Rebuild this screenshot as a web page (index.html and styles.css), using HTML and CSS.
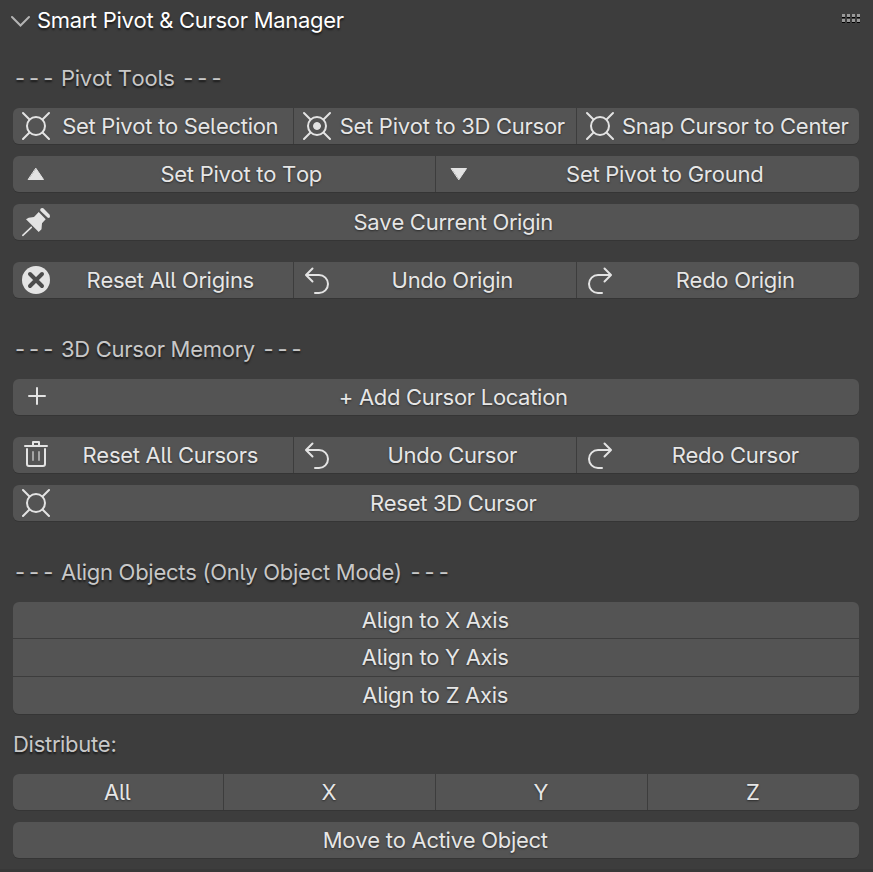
FILE: index.html
```
<!DOCTYPE html>
<html lang="en">
<head>
<meta charset="utf-8">
<title>Smart Pivot &amp; Cursor Manager</title>
<link rel="stylesheet" href="styles.css">
</head>
<body>
<svg class="defs" width="0" height="0" aria-hidden="true">
  <symbol id="cursor" viewBox="0 0 46 36"><circle cx="23" cy="18" r="9"/><path d="M10 5l6.500 6.500M36 5l-6.500 6.500M10 31l6.500-6.500M36 31l-6.500-6.500"/></symbol>
  <symbol id="undo" viewBox="0 0 46 36"><path d="M21 31h4a9 9 0 0 0 0-18H12.500M18.500 6.500L12 13l6.500 6.500"/></symbol>
  <symbol id="redo" viewBox="0 0 46 36"><path d="M25 31h-4a9 9 0 0 1 0-18h12.500M27.500 6.500L34 13l-6.500 6.500"/></symbol>
</svg>
<main class="panel">
  <header class="head">
    <svg class="chevron" width="20" height="14" viewBox="0 0 20 14"><path d="M2 3l8.500 8.500L19 3"/></svg>
    <h1>Smart Pivot &amp; Cursor Manager</h1>
    <div class="grip"><i></i><i></i><i></i><i></i><i></i><i></i><i></i><i></i></div>
  </header>

  <section>
    <h2><span class="dash lead">---</span> Pivot Tools <span class="dash trail">---</span></h2>
    <div class="row three">
      <button class="ic"><svg class="icon"><use href="#cursor"/></svg><span>Set Pivot to Selection</span></button>
      <button class="ic"><svg class="icon"><use href="#cursor"/><circle class="fill" cx="23" cy="18" r="3.500"/></svg><span>Set Pivot to 3D Cursor</span></button>
      <button class="ic"><svg class="icon"><use href="#cursor"/></svg><span>Snap Cursor to Center</span></button>
    </div>
    <div class="row two">
      <button class="ic"><svg class="icon"><path class="fill" d="M23 12.500L30.500 23.500h-15z"/></svg><span>Set Pivot to Top</span></button>
      <button class="ic"><svg class="icon"><path class="fill" d="M23 23.500L30.500 12.500h-15z"/></svg><span>Set Pivot to Ground</span></button>
    </div>
    <div class="row">
      <button class="ic"><svg class="icon"><path class="fill solid" d="M25.700 8L32.700 15.200 29 19.300 28.500 25.300 25.700 28 13 15.300 15.700 13.700 21 13zM27.300 4.900Q28.800 3.400 30.300 4.300L36.700 10.700Q37.500 12.500 36.300 14L34.800 13.800 27.300 6.700z"/><path class="needle" d="M18.300 23.300L9.800 31.300"/></svg><span>Save Current Origin</span></button>
    </div>
    <div class="row three spaced">
      <button class="ic"><svg class="icon"><circle class="fill solid" cx="23" cy="18" r="14"/><path class="cross" d="M17 12l12 12M29 12L17 24"/></svg><span>Reset All Origins</span></button>
      <button class="ic"><svg class="icon"><use href="#undo"/></svg><span>Undo Origin</span></button>
      <button class="ic"><svg class="icon"><use href="#redo"/></svg><span>Redo Origin</span></button>
    </div>
  </section>

  <section>
    <h2><span class="dash lead">---</span> 3D Cursor Memory <span class="dash trail">---</span></h2>
    <div class="row">
      <button class="ic"><svg class="icon"><path d="M24 9v16M16 17h16"/></svg><span>+ Add Cursor Location</span></button>
    </div>
    <div class="row three spaced">
      <button class="ic"><svg class="icon"><path d="M12 9h22M20 9V5h6v4M14 12v15q0 2 2 2h14q2 0 2-2V12"/><path class="dim" d="M20 15v8M26 15v8"/></svg><span>Reset All Cursors</span></button>
      <button class="ic"><svg class="icon"><use href="#undo"/></svg><span>Undo Cursor</span></button>
      <button class="ic"><svg class="icon"><use href="#redo"/></svg><span>Redo Cursor</span></button>
    </div>
    <div class="row">
      <button class="ic"><svg class="icon"><use href="#cursor"/></svg><span>Reset 3D Cursor</span></button>
    </div>
  </section>

  <section>
    <h2><span class="dash lead">---</span> Align Objects (Only Object Mode) <span class="dash trail">---</span></h2>
    <div class="row stack">
      <button><span>Align to X Axis</span></button>
      <button><span>Align to Y Axis</span></button>
      <button><span>Align to Z Axis</span></button>
    </div>
    <p class="label">Distribute:</p>
    <div class="row four">
      <button><span>All</span></button>
      <button><span>X</span></button>
      <button><span>Y</span></button>
      <button><span>Z</span></button>
    </div>
    <div class="row">
      <button><span>Move to Active Object</span></button>
    </div>
  </section>
</main>
</body>
</html>
```
FILE: styles.css
```
* { box-sizing: border-box; }
body {
  margin: 0;
  background: #3d3d3d;
  font-family: Inter, sans-serif;
  font-size: 22px;
  font-kerning: none;
  font-feature-settings: "cv05" 1;
  color: #e6e6e6;
}
.defs { position: absolute; }
.panel { height: 872px; overflow: hidden; border-bottom: 3px solid #383838; }
.head { display: flex; align-items: flex-start; height: 27px; padding: 0 13px 0 10px; }
.chevron { margin: 14px 7px 0 0; fill: none; stroke: #b4b4b4; stroke-width: 2; stroke-linecap: round; }
h1, h2, .label { margin: 0; font-size: 22px; font-weight: 400; white-space: pre; text-shadow: 0 2px 2px rgba(0,0,0,.6); }
h1 { color: #fff; line-height: 40px; letter-spacing: -.29px; }
.grip { display: grid; grid-template-columns: repeat(4, 3px); gap: 1px 2px; margin: 14px 0 0 auto; }
.grip i { height: 4px; background: #999; border-bottom: 1px solid #000; }
section { padding: 33px 14px 0 13px; }
h2, .label { height: 36px; line-height: 36px; color: #c8c8c8; letter-spacing: -.27px; }
h2 { padding-left: 2px; }
.dash { letter-spacing: 4px; }
.lead { margin-right: -2.300px; }
.trail { margin-left: 2.700px; }
.row { display: grid; gap: 1px; margin-top: 12px; border-radius: 6px; overflow: hidden; box-shadow: 0 1px 0 #353535; grid-auto-rows: 36px; }
.spaced { margin-top: 22px; }
.three { grid-template-columns: 280px 282px 282px; }
.two { grid-template-columns: 422px 423px; }
.four { grid-template-columns: 210px 211px 211px 211px; }
.stack { grid-template-rows: 36px 37px 37px; }
.label { margin-top: 12px; }
button {
  display: flex; align-items: center; justify-content: center; position: relative;
  margin: 0; padding: 0 1.500px 0 0; border: 0; background: #545454; color: #e6e6e6;
  font: inherit; font-kerning: none; font-feature-settings: "cv05" 1; letter-spacing: -.28px; white-space: nowrap;
  text-shadow: 0 1px 2px rgba(0,0,0,.5);
}
.stack button { padding-bottom: 1px; }
.ic { padding-left: 36px; }
.icon { position: absolute; left: 0; top: 0; width: 46px; height: 36px; fill: none; stroke: #e3e3e3; stroke-width: 2; stroke-linecap: round; stroke-linejoin: round; }
.fill { fill: #e3e3e3; stroke-width: 1; }
.solid { stroke: none; }
.needle { stroke-width: 1.600; }
.cross { stroke: #4c4c4c; stroke-width: 4; }
.dim { stroke: #a5a5a5; }
```
